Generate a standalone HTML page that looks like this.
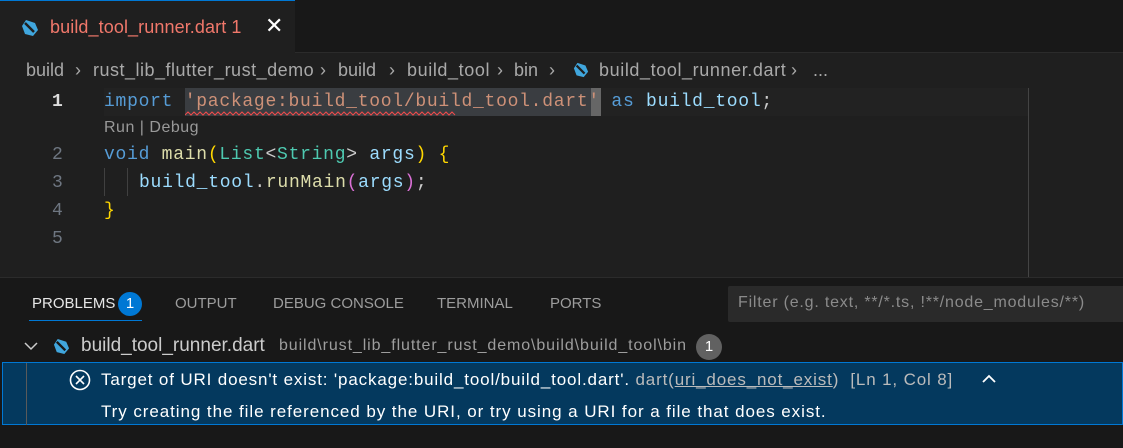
<!DOCTYPE html>
<html><head><style>
body{margin:0;width:1123px;height:447px;background:#1f1f1f;overflow:hidden;position:relative;font-family:"Liberation Sans",sans-serif;}
.a{position:absolute;white-space:pre;}
.code{font-family:"Liberation Mono",monospace;font-size:18px;letter-spacing:0.73px;}
.bc{position:absolute;top:60px;font-size:18px;color:#a9a9a9;white-space:pre;}
</style></head><body>
<div class="a" style="left:0;top:0;width:1123px;height:52px;background:#181818;border-bottom:1px solid #2b2b2b"></div>
<div class="a" style="left:0;top:0;width:295px;height:53px;background:#1f1f1f;border-top:1px solid #0078d4;box-sizing:border-box"></div>
<svg class="a" style="left:21px;top:19px" width="18" height="18" viewBox="0 0 18 18"><path d="M5 1 L14 4 L17 11 L12 17 L4 15 L1 7 Z" fill="#40a6dd"/><path d="M4 4 L13 13" stroke="#1f1f1f" stroke-width="2.5"/></svg>
<div class="a" style="left:50px;top:17px;font-size:18px;color:#f1786b;letter-spacing:0.1px">build_tool_runner.dart 1</div>
<div class="a" style="left:265px;top:13px;font-size:22px;color:#fff">✕</div>
<div class="bc" style="left:26px">build</div>
<div class="bc" style="left:75px">›</div>
<div class="bc" style="left:93px;letter-spacing:0.5px">rust_lib_flutter_rust_demo</div>
<div class="bc" style="left:320px">›</div>
<div class="bc" style="left:338px">build</div>
<div class="bc" style="left:389px">›</div>
<div class="bc" style="left:407px;letter-spacing:0.6px">build_tool</div>
<div class="bc" style="left:497px">›</div>
<div class="bc" style="left:514px">bin</div>
<div class="bc" style="left:549px">›</div>
<svg class="a" style="left:573px;top:62px" width="16" height="16" viewBox="0 0 18 18"><path d="M5 1 L14 4 L17 11 L12 17 L4 15 L1 7 Z" fill="#40a6dd"/><path d="M4 4 L13 13" stroke="#1f1f1f" stroke-width="2.5"/></svg>
<div class="bc" style="left:599px;letter-spacing:0.6px">build_tool_runner.dart</div>
<div class="bc" style="left:791px">›</div>
<div class="bc" style="left:813px">...</div>
<div class="a" style="left:104px;top:88px;width:924px;height:28px;background:#222"></div>
<div class="a" style="left:185px;top:88px;width:416px;height:28px;background:#3a3d41"></div>
<div class="a" style="left:591px;top:88px;width:10px;height:28px;background:#666"></div>
<svg class="a" style="left:185px;top:111px" width="416" height="6"><path d="M0 4 l3 -3 l3 3 l3 -3 l3 3 l3 -3 l3 3 l3 -3 l3 3 l3 -3 l3 3 l3 -3 l3 3 l3 -3 l3 3 l3 -3 l3 3 l3 -3 l3 3 l3 -3 l3 3 l3 -3 l3 3 l3 -3 l3 3 l3 -3 l3 3 l3 -3 l3 3 l3 -3 l3 3 l3 -3 l3 3 l3 -3 l3 3 l3 -3 l3 3 l3 -3 l3 3 l3 -3 l3 3 l3 -3 l3 3 l3 -3 l3 3 l3 -3 l3 3 l3 -3 l3 3 l3 -3 l3 3 l3 -3 l3 3 l3 -3 l3 3 l3 -3 l3 3 l3 -3 l3 3 l3 -3 l3 3 l3 -3 l3 3 l3 -3 l3 3 l3 -3 l3 3 l3 -3 l3 3 l3 -3 l3 3 l3 -3 l3 3 l3 -3 l3 3 l3 -3 l3 3 l3 -3 l3 3 l3 -3 l3 3 l3 -3 l3 3 l3 -3 l3 3 l3 -3 l3 3 l3 -3 l3 3 l3 -3 l3 3" stroke="#f14c4c" fill="none" stroke-width="1"/></svg>
<div class="a code" style="left:52px;top:92px;color:#ddd;font-weight:bold">1</div>
<div class="a code" style="left:52px;top:145px;color:#6e7681">2</div>
<div class="a code" style="left:52px;top:173px;color:#6e7681">3</div>
<div class="a code" style="left:52px;top:201px;color:#6e7681">4</div>
<div class="a code" style="left:52px;top:229px;color:#6e7681">5</div>
<div class="a code" style="left:104px;top:92px;color:#569cd6">import <span style="color:#ce9178">'package:build_tool/build_tool.dart'</span> as <span style="color:#9cdcfe">build_tool</span><span style="color:#ccc">;</span></div>
<div class="a" style="left:104px;top:119px;font-size:16px;color:#999;letter-spacing:0.5px">Run | Debug</div>
<div class="a code" style="left:104px;top:145px;color:#569cd6">void <span style="color:#dcdcaa">main</span><span style="color:#ffd700">(</span><span style="color:#4ec9b0">List</span><span style="color:#ccc">&lt;</span><span style="color:#4ec9b0">String</span><span style="color:#ccc">&gt;</span> <span style="color:#9cdcfe">args</span><span style="color:#ffd700">)</span> <span style="color:#ffd700">{</span></div>
<div class="a" style="left:104px;top:168px;width:1px;height:28px;background:#404040"></div>
<div class="a" style="left:127px;top:168px;width:1px;height:28px;background:#404040"></div>
<div class="a code" style="left:139px;top:173px;color:#9cdcfe">build_tool<span style="color:#ccc">.</span><span style="color:#dcdcaa">runMain</span><span style="color:#da70d6">(</span>args<span style="color:#da70d6">)</span><span style="color:#ccc">;</span></div>
<div class="a code" style="left:104px;top:201px;color:#ffd700">}</div>
<div class="a" style="left:1028px;top:88px;width:1px;height:189px;background:#444"></div>
<div class="a" style="left:0;top:277px;width:1123px;height:170px;background:#181818;border-top:1px solid #2b2b2b"></div>
<div class="a" style="left:32px;top:295px;font-size:15px;color:#e7e7e7">PROBLEMS</div>
<div class="a" style="left:118px;top:292px;width:24px;height:24px;border-radius:12px;background:#0078d4;color:#fff;font-size:15px;text-align:center;line-height:24px">1</div>
<div class="a" style="left:29px;top:320px;width:113px;height:1px;background:#0078d4"></div>
<div class="a" style="left:175px;top:295px;font-size:15px;color:#9d9d9d">OUTPUT</div>
<div class="a" style="left:273px;top:295px;font-size:15px;color:#9d9d9d">DEBUG CONSOLE</div>
<div class="a" style="left:437px;top:295px;font-size:15px;color:#9d9d9d">TERMINAL</div>
<div class="a" style="left:550px;top:295px;font-size:15px;color:#9d9d9d">PORTS</div>
<div class="a" style="left:728px;top:286px;width:400px;height:36px;background:#2a2a2a;border-radius:2px"></div>
<div class="a" style="left:738px;top:294px;font-size:16px;color:#8b8b8b;letter-spacing:0.8px">Filter (e.g. text, **/*.ts, !**/node_modules/**)</div>
<svg class="a" style="left:23px;top:340px" width="16" height="12"><path d="M2 3 L8 9 L14 3" stroke="#ccc" stroke-width="1.5" fill="none"/></svg>
<svg class="a" style="left:53px;top:338px" width="17" height="17" viewBox="0 0 18 18"><path d="M5 1 L14 4 L17 11 L12 17 L4 15 L1 7 Z" fill="#40a6dd"/><path d="M4 4 L13 13" stroke="#181818" stroke-width="2.5"/></svg>
<div class="a" style="left:81px;top:335px;font-size:19px;color:#ccc">build_tool_runner.dart</div>
<div class="a" style="left:279px;top:337px;font-size:16px;color:#9d9d9d;letter-spacing:0.9px">build\rust_lib_flutter_rust_demo\build\build_tool\bin</div>
<div class="a" style="left:696px;top:334px;width:26px;height:26px;border-radius:13px;background:#616161;color:#fff;font-size:15px;text-align:center;line-height:26px">1</div>
<div class="a" style="left:2px;top:362px;width:1121px;height:63px;background:#04395e;border:1px solid #0078d4;box-sizing:border-box"></div>
<div class="a" style="left:26px;top:363px;width:1px;height:62px;background:#5a5a5a"></div>
<svg class="a" style="left:68px;top:368px" width="24" height="24"><circle cx="12" cy="12" r="9.5" stroke="#fff" stroke-width="1.6" fill="none"/><path d="M8 8 L16 16 M16 8 L8 16" stroke="#fff" stroke-width="1.6"/></svg>
<div class="a" style="left:101px;top:370px;font-size:17px;color:#fff;letter-spacing:0.85px">Target of URI doesn't exist: 'package:build_tool/build_tool.dart'. <span style="color:#bbb">dart(<span style="text-decoration:underline">uri_does_not_exist</span>)  [Ln 1, Col 8]</span></div>
<svg class="a" style="left:980px;top:372px" width="18" height="14"><path d="M3 10 L9 4 L15 10" stroke="#fff" stroke-width="1.8" fill="none"/></svg>
<div class="a" style="left:101px;top:402px;font-size:17px;color:#fff;letter-spacing:0.93px">Try creating the file referenced by the URI, or try using a URI for a file that does exist.</div>
</body></html>
